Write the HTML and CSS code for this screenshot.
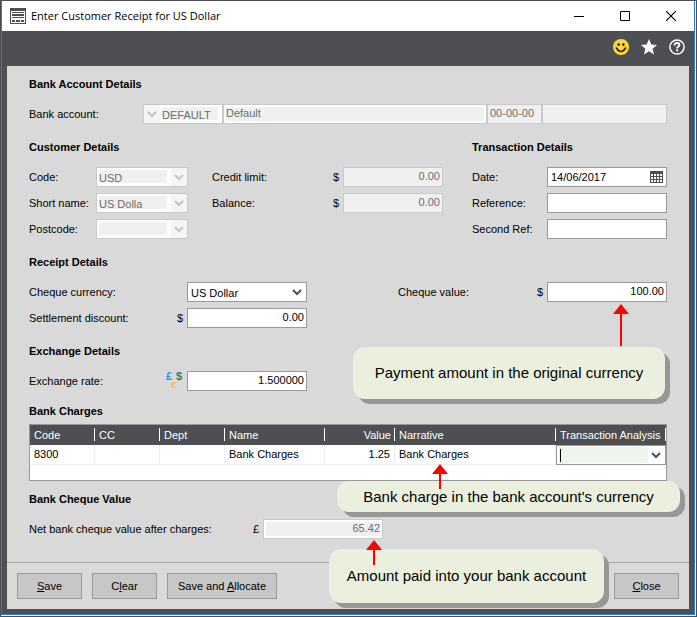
FILE: index.html
```html
<!DOCTYPE html>
<html lang="en">
<head>
    <meta charset="UTF-8">
    <meta name="viewport" content="width=device-width, initial-scale=1.0">
    <title>Enter Customer Receipt for US Dollar</title>
    <link rel="stylesheet" href="styles.css">
</head>
<body>
    <div class="window">
        <header class="titlebar">
            <svg class="app-icon" width="16" height="16" viewBox="0 0 16 16">
                <path d="M0 0h16v16H0z" fill="#4d4f53"/>
                <path d="M1 3h14v12H1z" fill="#fff"/>
                <path d="M2 4h12v1H2zM2 6h12v2H2zM2 9h12v1H2zM2 12h3v2H2zM6 12h4v2H6zM11 12h3v2h-3z" fill="#4d4f53"/>
            </svg>
            <h1>Enter Customer Receipt for US Dollar</h1>
            <div class="window-buttons">
                <button type="button" aria-label="Minimise">
                    <svg width="10" height="10" viewBox="0 0 10 10"><path d="M0 5h10v1H0z"/></svg>
                </button>
                <button type="button" aria-label="Maximise">
                    <svg width="10" height="10" viewBox="0 0 10 10"><path d="M.5.5h9v9h-9z" fill="none" stroke="#000"/></svg>
                </button>
                <button type="button" aria-label="Close window">
                    <svg width="10" height="10" viewBox="0 0 10 10"><path d="M0 0l10 10M10 0L0 10" fill="none" stroke="#000" stroke-width="1.1"/></svg>
                </button>
            </div>
        </header>

        <nav class="toolbar">
            <button type="button" aria-label="Feedback">
                <svg width="16" height="16" viewBox="0 0 16 16">
                    <circle cx="8" cy="8" r="8" fill="#fdd835"/>
                    <ellipse cx="5.6" cy="5.6" rx="1.2" ry="1.5" fill="#222"/>
                    <ellipse cx="10.4" cy="5.6" rx="1.2" ry="1.5" fill="#222"/>
                    <path d="M3.4 9q4.6 7 9.2 0" fill="none" stroke="#222" stroke-width="1.6" stroke-linecap="round"/>
                </svg>
            </button>
            <button type="button" aria-label="Favourite">
                <svg width="16" height="16" viewBox="0 0 16 16">
                    <path d="M8 0l2.3 5.6 5.7.4-4.400 3.700L13 15.500l-5-3.200-5 3.200 1.400-5.800L0 6l5.700-.4z" fill="#fff"/>
                </svg>
            </button>
            <button type="button" aria-label="Help">
                <svg width="16" height="16" viewBox="0 0 16 16" fill="none" stroke="#fff">
                    <circle cx="8" cy="8" r="7.100" stroke-width="1.500"/>
                    <path d="M5.600 6.400q0-2.400 2.400-2.400t2.400 2c0 1.500-2.300 1.500-2.300 3.400" stroke-width="1.900"/>
                    <path d="M8.100 10.400v1.900" stroke-width="2"/>
                </svg>
            </button>
        </nav>

        <form class="panel">
            <div class="panel-body">
                <section class="group">
                    <h2>Bank Account Details</h2>
                    <div class="account-row">
                        <label for="bankAccount">Bank account:</label>
                        <select id="bankAccount" class="combo arrow-left" disabled><option>DEFAULT</option></select>
                        <input type="text" class="field framed" value="Default" aria-label="Account name" disabled>
                        <input type="text" class="field" value="00-00-00" aria-label="Sort code" disabled>
                        <input type="text" class="field" aria-label="Account number" disabled>
                    </div>
                </section>

                <div class="columns group">
                    <section>
                        <h2>Customer Details</h2>
                        <div class="customer-grid">
                            <label for="code">Code:</label>
                            <select id="code" class="combo" disabled><option>USD</option></select>
                            <label for="creditLimit" class="money-label">Credit limit: <span>$</span></label>
                            <input type="text" id="creditLimit" class="field amount" value="0.00" disabled>

                            <label for="shortName">Short name:</label>
                            <select id="shortName" class="combo" disabled><option>US Dolla</option></select>
                            <label for="balance" class="money-label">Balance: <span>$</span></label>
                            <input type="text" id="balance" class="field amount" value="0.00" disabled>

                            <label for="postcode">Postcode:</label>
                            <select id="postcode" class="combo" disabled><option></option></select>
                        </div>
                    </section>
                    <section>
                        <h2>Transaction Details</h2>
                        <div class="transaction-grid">
                            <label for="date">Date:</label>
                            <div class="date-box">
                                <input type="text" id="date" value="14/06/2017">
                                <button type="button" aria-label="Open calendar">
                                    <svg width="13" height="12" viewBox="0 0 13 12">
                                        <path d="M0 0h13v12H0z" fill="#4d4f53"/>
                                        <path d="M1 3h2v2H1zM4 3h2v2H4zM7 3h2v2H7zM10 3h2v2h-2zM1 6h2v2H1zM4 6h2v2H4zM7 6h2v2H7zM10 6h2v2h-2zM1 9h2v2H1zM4 9h2v2H4zM7 9h2v2H7zM10 9h2v2h-2z" fill="#fff"/>
                                    </svg>
                                </button>
                            </div>
                            <label for="reference">Reference:</label>
                            <input type="text" id="reference" class="field">
                            <label for="secondRef">Second Ref:</label>
                            <input type="text" id="secondRef" class="field">
                        </div>
                    </section>
                </div>

                <section class="group">
                    <h2>Receipt Details</h2>
                    <div class="receipt-grid">
                        <label for="currency">Cheque currency:</label>
                        <select id="currency" class="combo active"><option>US Dollar</option></select>
                        <label for="chequeValue" class="money-label wide">Cheque value: <span>$</span></label>
                        <div class="noted">
                            <input type="text" id="chequeValue" class="field amount" value="100.00">
                            <svg class="pointer pointer-payment" width="16" height="42" viewBox="0 0 16 42"><path d="M8 0l8 10H9v32H7V10H0z" fill="#f00"/></svg>
                            <div class="note note-payment">Payment amount in the original currency</div>
                        </div>
                        <label for="discount" class="money-label">Settlement discount: <span>$</span></label>
                        <input type="text" id="discount" class="field amount" value="0.00">
                    </div>
                </section>

                <section class="group">
                    <h2>Exchange Details</h2>
                    <div class="receipt-grid">
                        <label for="rate" class="money-label">Exchange rate:
                            <svg class="currencies" width="18" height="18" viewBox="0 0 18 18">
                                <text class="pound" x="1" y="9">£</text>
                                <text class="dollar" x="11" y="9">$</text>
                                <text class="euro" x="6" y="17">€</text>
                            </svg>
                        </label>
                        <input type="text" id="rate" class="field amount" value="1.500000">
                    </div>
                </section>

                <section class="group charges">
                    <h2>Bank Charges</h2>
                    <div class="table-box">
                        <table>
                            <colgroup>
                                <col class="col-code"><col class="col-code"><col class="col-code">
                                <col class="col-name"><col class="col-value"><col><col class="col-analysis">
                            </colgroup>
                            <thead>
                                <tr>
                                    <th>Code</th>
                                    <th>CC</th>
                                    <th>Dept</th>
                                    <th>Name</th>
                                    <th class="number">Value</th>
                                    <th>Narrative</th>
                                    <th>Transaction Analysis</th>
                                </tr>
                            </thead>
                            <tbody>
                                <tr>
                                    <td>8300</td>
                                    <td></td>
                                    <td></td>
                                    <td>Bank Charges</td>
                                    <td class="number">1.25</td>
                                    <td class="noted">Bank Charges
                                        <svg class="pointer pointer-charge" width="16" height="25" viewBox="0 0 16 25"><path d="M8 0l8 10H9v15H7V10H0z" fill="#f00"/></svg>
                                        <div class="note note-charge">Bank charge in the bank account's currency</div>
                                    </td>
                                    <td class="edit-cell">
                                        <select class="combo active editing" aria-label="Transaction analysis"><option></option></select>
                                    </td>
                                </tr>
                            </tbody>
                        </table>
                    </div>
                </section>

                <section class="group cheque-value">
                    <h2>Bank Cheque Value</h2>
                    <div class="net-grid">
                        <label for="netValue" class="money-label">Net bank cheque value after charges: <span>£</span></label>
                        <div class="noted">
                            <input type="text" id="netValue" class="field framed amount" value="65.42" disabled>
                            <svg class="pointer pointer-paid" width="16" height="25" viewBox="0 0 16 25"><path d="M8 0l8 10H9v15H7V10H0z" fill="#f00"/></svg>
                            <div class="note note-paid">Amount paid into your bank account</div>
                        </div>
                    </div>
                </section>
            </div>

            <footer class="actions">
                <button type="button"><u>S</u>ave</button>
                <button type="button">C<u>l</u>ear</button>
                <button type="button" class="long">Save and <u>A</u>llocate</button>
                <button type="button" class="close"><u>C</u>lose</button>
            </footer>
        </form>
    </div>
</body>
</html>
```
FILE: styles.css
```css
* {
    box-sizing: border-box;
}

body {
    margin: 0;
    min-height: 100vh;
    display: flex;
    padding: 0 1px 1px 0;
    border: 1px solid #4d4f53;
    background: #fff;
    color: #000;
    font-family: "Liberation Sans", Arial, sans-serif;
    font-size: 11px;
    line-height: 20px;
}

button, input, select {
    margin: 0;
    color: inherit;
    font: inherit;
}

h1, h2 {
    margin: 0;
}

svg {
    display: block;
}

.window {
    flex: 1;
    min-width: 0;
    display: flex;
    flex-direction: column;
    border: 1px solid #1883d7;
    border-top: none;
    background: #4d4f53;
}

/* title bar */
.titlebar {
    display: flex;
    align-items: center;
    height: 30px;
    padding-left: 8px;
    background: #fff;
}

.titlebar h1 {
    flex: 1;
    margin-left: 5px;
    font-family: "Open Sans", "Noto Sans", sans-serif;
    font-size: 11px;
    font-weight: normal;
}

.window-buttons {
    display: flex;
}

.window-buttons button {
    width: 46px;
    height: 28px;
    padding: 0 18px;
    border: none;
    background: none;
}

.toolbar {
    display: flex;
    justify-content: flex-end;
    align-items: center;
    gap: 12px;
    height: 35px;
    padding: 0 9px 4px 0;
}

.toolbar button {
    padding: 0;
    border: none;
    background: none;
}

/* form */
.panel {
    flex: 1;
    display: flex;
    flex-direction: column;
    margin: 0 5px 5px;
    background: #d9d9d9;
}

.panel-body {
    flex: 1;
    padding: 8px 22px 23px;
}

.group + .group {
    margin-top: 13px;
}

.group + .charges {
    margin-top: 10px;
}

.group + .cheque-value {
    margin-top: 8px;
}

h2 {
    margin-bottom: 10px;
    font-size: 11px;
    font-weight: bold;
}

.charges h2 {
    margin-bottom: 3px;
}

.account-row {
    display: grid;
    grid-template-columns: 114px 80px 1fr 55px 125px;
}

.columns {
    display: grid;
    grid-template-columns: minmax(0, 414fr) minmax(0, 195fr);
    gap: 29px;
}

.customer-grid,
.transaction-grid,
.receipt-grid,
.net-grid {
    display: grid;
    row-gap: 6px;
}

.customer-grid {
    grid-template-columns: 67px 92px 1fr 100px;
}

.transaction-grid {
    grid-template-columns: 75px minmax(0, 1fr);
}

.receipt-grid {
    grid-template-columns: 158px 120px 1fr 120px;
}

.net-grid {
    grid-template-columns: 234px 120px;
}

.money-label {
    display: flex;
    justify-content: space-between;
    padding-right: 4px;
}

.customer-grid .money-label {
    padding-left: 24px;
}

.money-label.wide {
    padding-left: 91px;
}

.currencies text {
    font-size: 11px;
    font-weight: bold;
}

.pound {
    fill: #169bd7;
}

.dollar {
    fill: #1b8767;
}

.currencies .euro {
    fill: #f7b54e;
    font-size: 9px;
}

/* inputs */
.field,
.combo,
.date-box {
    display: block;
    width: 100%;
    min-width: 0;
    height: 20px;
    padding: 0 2px 2px;
    border: 1px solid #999;
    border-radius: 0;
    background: #fff;
}

.field:disabled,
.combo:disabled {
    border-color: #c9c9c9;
    background-color: #f0f0f0;
    color: #6d6d6d;
    opacity: 1;
}

.field.framed {
    box-shadow: inset 0 0 0 2px #fff;
}

.amount {
    text-align: right;
}

.combo {
    appearance: none;
    padding: 0 17px 2px 2px;
    background:
        url("data:image/svg+xml,%3Csvg xmlns='http://www.w3.org/2000/svg' width='10' height='7'%3E%3Cpath d='M1 1l4 4 4-4' fill='none' stroke='%23c4c4c4' stroke-width='2'/%3E%3C/svg%3E") right 3px center no-repeat,
        linear-gradient(#f5f5f5, #f5f5f5) right top / 16px 100% no-repeat,
        linear-gradient(#f0f0f0, #f0f0f0) 2px 2px / calc(100% - 22px) 13px no-repeat;
}

.combo:disabled {
    background-color: #fff;
}

.combo.arrow-left {
    padding: 0 2px 2px 18px;
    background-position: 3px center, left top, 18px 2px;
}

.combo.active {
    padding-bottom: 0;
    padding-left: 3px;
    background:
        url("data:image/svg+xml,%3Csvg xmlns='http://www.w3.org/2000/svg' width='10' height='7'%3E%3Cpath d='M1 1l4 4 4-4' fill='none' stroke='%234d4f53' stroke-width='2'/%3E%3C/svg%3E") right 4px center no-repeat,
        #fff;
}

/* open cell editor: text cursor, tinted text area */
.combo.editing {
    background:
        url("data:image/svg+xml,%3Csvg xmlns='http://www.w3.org/2000/svg' width='10' height='7'%3E%3Cpath d='M1 1l4 4 4-4' fill='none' stroke='%234d4f53' stroke-width='2'/%3E%3C/svg%3E") right 4px center no-repeat,
        linear-gradient(#000, #000) 3px 3px / 1px 13px no-repeat,
        linear-gradient(#edf5ed, #edf5ed) 2px 1px / calc(100% - 19px) 16px no-repeat,
        #fff;
}

.date-box {
    display: flex;
    align-items: center;
    padding: 0 3px;
}

.date-box input {
    flex: 1;
    min-width: 0;
    padding: 0;
    border: none;
    background: none;
}

.date-box button {
    padding: 0;
    border: none;
    background: none;
}

/* charges table */
.table-box {
    min-height: 57px;
    border: 1px solid #999;
    background: #fff;
}

table {
    width: 100%;
    table-layout: fixed;
    border-collapse: separate;
    border-spacing: 0;
}

.col-code {
    width: 65px;
}

.col-name {
    width: 100px;
}

.col-value {
    width: 70px;
}

.col-analysis {
    width: 110px;
}

th, td {
    height: 20px;
    padding: 0 4px;
    line-height: 19px;
    text-align: left;
    white-space: nowrap;
}

th {
    padding-bottom: 1px;
    line-height: 18px;
    background: linear-gradient(#fff, #fff) right 3px / 1px 13px no-repeat #4d4f53;
    color: #fff;
    font-weight: normal;
}

td {
    border-right: 1px solid #eee;
    border-bottom: 1px solid #eee;
}

.number {
    text-align: right;
}

td.edit-cell {
    padding: 0;
    border: none;
}

/* notes over the form */
.noted {
    position: relative;
}

.note,
.pointer {
    position: absolute;
    z-index: 1;
}

.pointer {
    z-index: 2;
}

.note {
    display: flex;
    justify-content: center;
    align-items: center;
    border-radius: 12px;
    background: #ebf0de;
    box-shadow: 5px 5px 0 #979797;
    font-size: 15px;
    white-space: nowrap;
}

.note-payment {
    top: 65px;
    right: 2px;
    width: 312px;
    height: 52px;
}

.pointer-payment {
    top: 22px;
    right: 38px;
}

.note-charge {
    top: 36px;
    left: -58px;
    width: 343px;
    height: 31px;
}

.pointer-charge {
    top: 19px;
    left: 37px;
}

.note-paid {
    top: 30px;
    left: 66px;
    width: 275px;
    height: 54px;
}

.pointer-paid {
    top: 21px;
    left: 103px;
}

/* bottom buttons */
.actions {
    display: flex;
    gap: 10px;
    padding: 10px;
    border-top: 1px solid #a6a6a6;
}

.actions button {
    width: 65px;
    height: 26px;
    padding: 0;
    border: 1px solid #999;
    background: #c7c7c7;
}

.actions .long {
    width: 110px;
}

.actions .close {
    margin-left: auto;
}
```
